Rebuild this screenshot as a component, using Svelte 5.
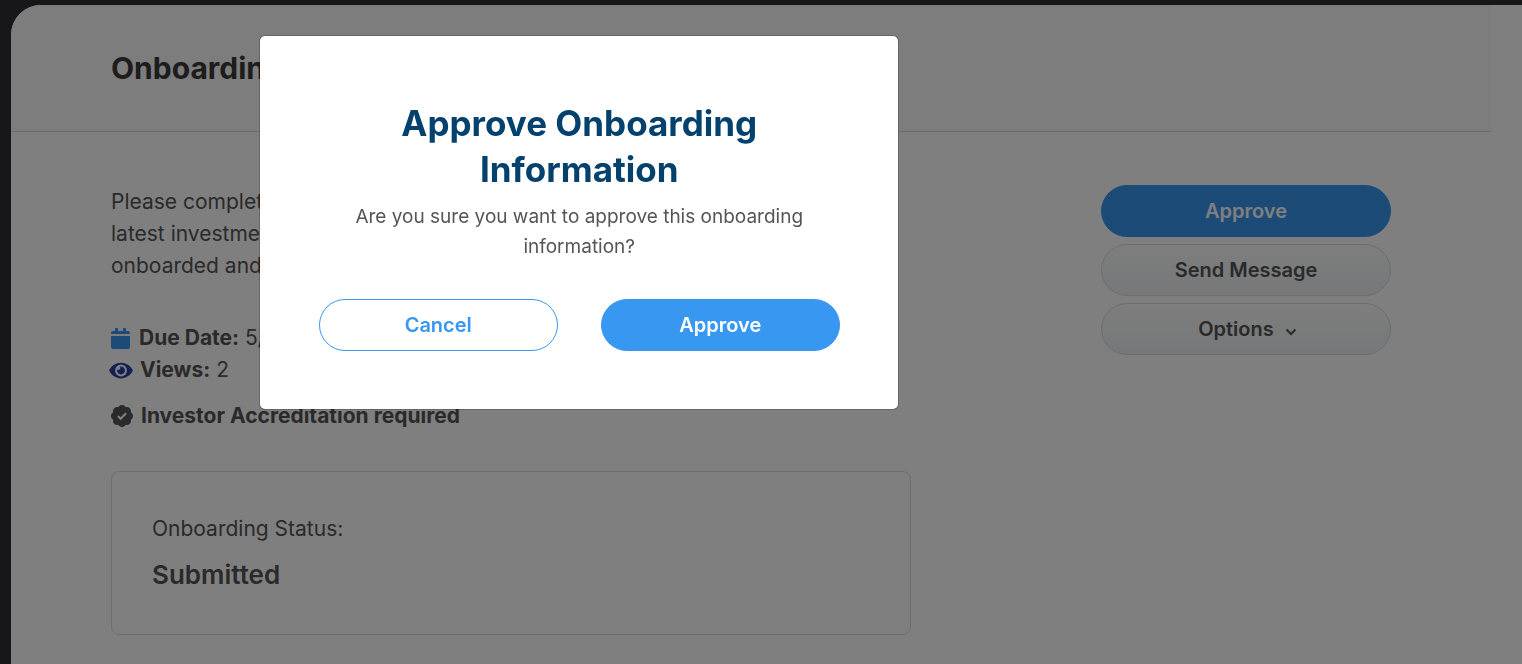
<script>
    let showModal = $state(true);

    const status = "Submitted";
    const views = 2;
    const dueDate = "5/31/2023";
</script>

<div class="app">
    <main class="panel">
        <header class="page-header">
            <h1>Onboarding Information</h1>
        </header>

        <div class="content">
            <div class="details">
                <p class="description">
                    Please complete the<br />
                    latest investment<br />
                    onboarded and set
                </p>

                <ul class="facts">
                    <li>
                        <svg class="calendar" viewBox="0 0 19 21" width="19" height="21" aria-hidden="true">
                            <path d="M4 .7a.7.700 0 0 1 .7-.7h1.600a.7.700 0 0 1 .7.700V3h5V.7a.7.700 0 0 1 .7-.7h1.600a.7.700 0 0 1 .7.700V3h2a2 2 0 0 1 2 2v1H0V5a2 2 0 0 1 2-2h2zM0 8h19v11a2 2 0 0 1-2 2H2a2 2 0 0 1-2-2z" />
                        </svg>
                        <span><strong>Due Date:</strong> {dueDate}</span>
                    </li>
                    <li>
                        <svg class="eye" viewBox="0 0 576 512" width="24" height="21" aria-hidden="true">
                            <path d="M572.52 241.4C518.29 135.59 410.93 64 288 64S57.68 135.64 3.48 241.41a32.35 32.35 0 0 0 0 29.19C57.71 376.41 165.07 448 288 448s230.32-71.64 284.52-177.41a32.35 32.35 0 0 0 0-29.19zM288 400a144 144 0 1 1 144-144 143.93 143.93 0 0 1-144 144zm0-240a95.31 95.31 0 0 0-25.31 3.79 47.85 47.85 0 0 1-66.9 66.9A95.78 95.78 0 1 0 288 160z" />
                        </svg>
                        <span><strong>Views:</strong> {views}</span>
                    </li>
                    <li class="accreditation">
                        <svg class="badge" viewBox="0 0 512 512" width="22" height="22" aria-hidden="true">
                            <path d="M256 0c36.800 0 68.800 20.700 84.900 51.100C373.800 41 411 49 437 75s34 63.300 23.900 96.100C491.300 187.200 512 219.200 512 256s-20.700 68.800-51.100 84.900C471 373.800 463 411 437 437s-63.300 34-96.100 23.900C324.800 491.300 292.800 512 256 512s-68.800-20.700-84.900-51.100C138.200 471 101 463 75 437s-34-63.300-23.900-96.100C20.700 324.800 0 292.800 0 256s20.700-68.800 51.100-84.900C41 138.200 49 101 75 75s63.300-34 96.100-23.900C187.200 20.700 219.200 0 256 0z" />
                            <path class="tick" d="M160 256l64 64 128-128" />
                        </svg>
                        <strong>Investor Accreditation required</strong>
                    </li>
                </ul>

                <section class="status-card">
                    <p>Onboarding Status:</p>
                    <h2>{status}</h2>
                </section>
            </div>

            <div class="actions">
                <button class="btn primary" onclick={() => (showModal = true)}>Approve</button>
                <button class="btn secondary">Send Message</button>
                <button class="btn secondary">
                    Options
                    <svg class="chevron" viewBox="0 0 12 8" width="12" height="8" aria-hidden="true">
                        <path d="M1.500 1.500L6 6l4.500-4.500" />
                    </svg>
                </button>
            </div>
        </div>
    </main>
</div>

{#if showModal}
    <div class="overlay">
        <div class="modal" role="dialog" aria-modal="true" aria-labelledby="modal-title">
            <h2 id="modal-title">Approve Onboarding Information</h2>
            <p>Are you sure you want to approve this onboarding information?</p>
            <div class="modal-buttons">
                <button class="btn outline" onclick={() => (showModal = false)}>Cancel</button>
                <button class="btn primary" onclick={() => (showModal = false)}>Approve</button>
            </div>
        </div>
    </div>
{/if}

<style>
    :global(body) {
        background: #2f2f34;
        color: #555;
        font-family: Inter, "Liberation Sans", sans-serif;
        font-size: 21px;
    }

    h1, h2, p, ul {
        margin: 0;
        padding: 0;
    }

    strong {
        font-weight: 700;
    }

    .app {
        box-sizing: border-box;
        min-height: 100vh;
        padding: 5px 0 0 11px;
        display: flex;
    }

    .panel {
        flex: 1;
        padding-right: 31px;
        background: #fff;
        border-top-left-radius: 30px;
        overflow: hidden;
    }

    .page-header {
        padding: 43px 100px;
        background: #fbfbfb;
        border-bottom: 1px solid #d9d9d9;
    }

    h1 {
        color: #3a3a3a;
        font-size: 30px;
        line-height: 40px;
        font-weight: 700;
    }

    .content {
        display: flex;
        justify-content: space-between;
        gap: 40px;
        padding: 53px 100px 29px;
    }

    .details {
        flex: 0 1 800px;
    }

    .description {
        padding-top: 1px;
        line-height: 32px;
    }

    .facts {
        list-style: none;
        margin: 40px 0 39px;
        line-height: 32px;
    }

    .facts li {
        display: flex;
        align-items: center;
        gap: 8px;
    }

    .facts .accreditation {
        margin-top: 14px;
    }

    .calendar {
        fill: #3897f1;
        margin-right: 1px;
    }

    .eye {
        fill: #2b3fa8;
        margin: 0 -1px 0 -2px;
    }

    .badge {
        fill: #555;
    }

    .tick {
        fill: none;
        stroke: #fff;
        stroke-width: 48;
    }

    .status-card {
        box-sizing: border-box;
        padding: 41px 40px 39px;
        border: 1px solid #dcdcdc;
        border-radius: 8px;
        line-height: 32px;
    }

    .status-card h2 {
        margin-top: 10px;
        font-size: 26px;
        line-height: 40px;
        font-weight: 600;
    }

    .actions {
        flex: 0 0 290px;
        display: flex;
        flex-direction: column;
        gap: 7px;
    }

    .btn {
        box-sizing: border-box;
        height: 52px;
        border: 1px solid #3897f1;
        border-radius: 26px;
        font-family: inherit;
        font-size: 20px;
        font-weight: 600;
        cursor: pointer;
    }

    .btn.primary {
        background: #3897f1;
        color: #fff;
    }

    .btn.outline {
        background: #fff;
        color: #3897f1;
    }

    .btn.secondary {
        background: linear-gradient(#fafcfa, #eef0f4);
        border-color: #d9dadc;
        color: #555;
    }

    .chevron {
        margin: 0 -3px 0 6px;
        fill: none;
        stroke: #555;
        stroke-width: 2;
    }

    .overlay {
        position: fixed;
        inset: 0;
        background: rgba(0, 0, 0, 0.5);
    }

    .modal {
        box-sizing: border-box;
        width: 640px;
        max-width: 100%;
        margin: 35px 0 0 17vw;
        padding: 64px 58px 58px 59px;
        background: #fff;
        background-clip: padding-box;
        border: 1px solid rgba(0, 0, 0, 0.2);
        border-radius: 6px;
        text-align: center;
    }

    .modal h2 {
        padding: 0 60px;
        color: #04416d;
        font-size: 35px;
        line-height: 46px;
        font-weight: 700;
    }

    .modal p {
        margin-top: 10px;
        padding: 0 30px;
        font-size: 19px;
        line-height: 30px;
    }

    .modal-buttons {
        display: flex;
        gap: 43px;
        margin-top: 37px;
    }

    .modal-buttons .btn {
        flex: 1;
    }
</style>
